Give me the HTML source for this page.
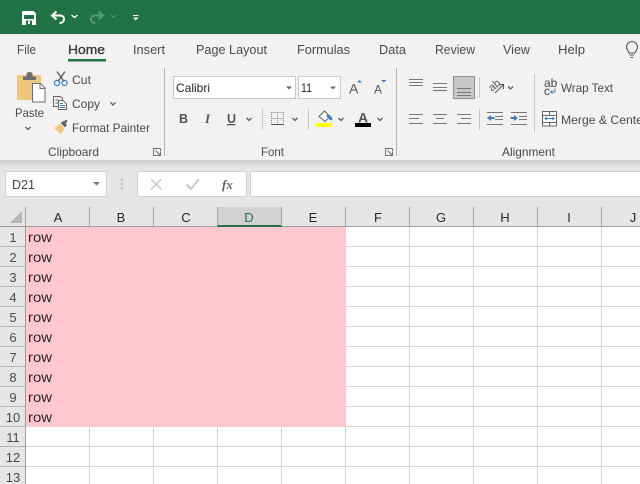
<!DOCTYPE html>
<html><head><meta charset="utf-8"><style>
html,body{margin:0;padding:0;width:640px;height:484px;overflow:hidden;background:#fff}
svg{display:block}
text{font-family:"Liberation Sans",sans-serif;fill:#4a4a4a;font-size:12px}
.t{font-size:13px;fill:#4a4a4a}
.h{font-size:13px;fill:#262626;text-anchor:middle}
.r{font-size:14px;fill:#262626}
.n{font-size:13px;fill:#4a4a4a;text-anchor:middle}
.c{fill:none;stroke:#5c5c5c;stroke-width:1.300}
.l{stroke:#777;stroke-width:1;fill:none}
</style></head><body>
<svg width="640" height="484" viewBox="0 0 640 484" xmlns="http://www.w3.org/2000/svg">
<defs><linearGradient id="sh" x1="0" y1="0" x2="0" y2="1"><stop offset="0" stop-color="#cdcdcd"/><stop offset="1" stop-color="#e6e6e6"/></linearGradient></defs>
<rect width="640" height="484" fill="#fff"/>
<rect width="640" height="34" fill="#217346"/>
<rect y="34" width="640" height="126" fill="#f3f2f1"/>
<rect y="160" width="640" height="8" fill="url(#sh)"/>
<rect y="168" width="640" height="59" fill="#e6e6e6"/>

<!-- QAT -->
<path d="M22 11h11.500l2.500 2.500v11.500h-14z" fill="#fff"/>
<rect x="24" y="15" width="10" height="4" fill="#217346"/>
<rect x="26" y="20.500" width="6" height="4.500" fill="#217346"/><rect x="28" y="21" width="2" height="3" fill="#fff"/>
<path d="M56.500 11.500l-4.500 4 4.500 4M52.500 15.500h7.500c5.500 0 5.500 7.500-.500 7.500" fill="none" stroke="#fff" stroke-width="2"/>
<path d="M71.500 15l3 2.500 3-2.500" fill="none" stroke="#fff" stroke-width="1.400"/>
<path d="M98.500 11.500l4.500 4-4.500 4M102.500 15.500h-7.500c-5.500 0-5.500 7.500.500 7.500" fill="none" stroke="#5a9a76" stroke-width="2"/>
<path d="M111 15l2.500 2.500 2.500-2.500" fill="none" stroke="#4f9670" stroke-width="1.200"/>
<path d="M133 15.500h5.500" stroke="#fff" stroke-width="1"/><path d="M133 17.500h5.500l-2.750 3z" fill="#fff"/>

<!-- Tabs -->
<text class="t" x="17" y="54" textLength="19" lengthAdjust="spacingAndGlyphs">File</text>
<text class="t" x="68" y="54" textLength="37" lengthAdjust="spacingAndGlyphs" style="fill:#333;stroke:#333;stroke-width:.3">Home</text>
<rect x="68" y="59" width="38" height="2.500" fill="#217346"/>
<text class="t" x="133" y="54" textLength="32" lengthAdjust="spacingAndGlyphs">Insert</text>
<text class="t" x="196" y="54" textLength="71" lengthAdjust="spacingAndGlyphs">Page Layout</text>
<text class="t" x="297" y="54" textLength="53" lengthAdjust="spacingAndGlyphs">Formulas</text>
<text class="t" x="379" y="54" textLength="27" lengthAdjust="spacingAndGlyphs">Data</text>
<text class="t" x="435" y="54" textLength="40" lengthAdjust="spacingAndGlyphs">Review</text>
<text class="t" x="503" y="54" textLength="27" lengthAdjust="spacingAndGlyphs">View</text>
<text class="t" x="558" y="54" textLength="27" lengthAdjust="spacingAndGlyphs">Help</text>
<path d="M629 53c-.500-2-2.500-3-2.500-6a5.500 5.500 0 0 1 11 0c0 3-2 4-2.500 6zM629.500 55h4.500M630.500 57.500h2.500" fill="none" stroke="#555" stroke-width="1.100"/>

<!-- Clipboard -->
<path d="M17 76a1 1 0 0 1 1-1h22a1 1 0 0 1 1 1v23a1 1 0 0 1-1 1h-22a1 1 0 0 1-1-1z" fill="#eec77f"/>
<path d="M23 80v-3.500h3.500v-2.500a3 2 0 0 1 6 0v2.500h3.500v3.500z" fill="#6d6d6d"/>
<path d="M32.500 83.500h8l4.500 4.500v14h-12.500z" fill="#fff" stroke="#6f6f6f" stroke-width="1"/>
<path d="M40 83.500v5h5" fill="none" stroke="#6f6f6f"/>
<text x="15" y="117" textLength="29" lengthAdjust="spacingAndGlyphs">Paste</text>
<path d="M25.500 127l2.500 2.500 2.500-2.500" class="c"/>
<path d="M57 71.500l7 10M65 71.500l-7 10" stroke="#666" stroke-width="1.500" fill="none"/>
<circle cx="57" cy="83" r="2.600" fill="none" stroke="#3f7fc1" stroke-width="1.300"/><circle cx="64.500" cy="83" r="2.600" fill="none" stroke="#3f7fc1" stroke-width="1.300"/>
<text x="72" y="84" textLength="19" lengthAdjust="spacingAndGlyphs">Cut</text>
<path d="M53.500 96.500h7l2 2v8h-9z" fill="#f3f2f1" stroke="#666"/>
<path d="M55.500 100h3M55.500 103h3" stroke="#666"/>
<path d="M58.500 100.500h4.500l3.500 3.500v5.500h-8z" fill="#fff" stroke="#666"/>
<path d="M60 103.500h3M60 105.500h5M60 107.500h5" stroke="#3f7fc1"/>
<text x="72" y="108" textLength="28" lengthAdjust="spacingAndGlyphs">Copy</text>
<path d="M110.500 102.500l2.500 2.500 2.500-2.500" class="c"/>
<path d="M54 128l6-4 4.500 5-3.500 5z" fill="#eec77f"/><path d="M60.500 123l3-2 3.500 3.500-2 3z" fill="#666"/><path d="M64 122.500l3-2" stroke="#666" stroke-width="2.500"/>
<text x="72" y="132" textLength="78" lengthAdjust="spacingAndGlyphs">Format Painter</text>
<text x="48" y="156" textLength="51" lengthAdjust="spacingAndGlyphs">Clipboard</text>
<path d="M153.500 148.500h7M153.500 148.500v7M160.500 148.500v3M153.500 155.500h3M155.500 150.500l5 5M160.500 152v3.500h-3.500" fill="none" stroke="#666" stroke-width=".9"/>
<rect x="164" y="68" width="1" height="88" fill="#b4b4b4"/>

<!-- Font -->
<rect x="173.500" y="76.500" width="122" height="22" fill="#fff" stroke="#c8c8c8"/>
<text x="176" y="92" textLength="34" lengthAdjust="spacingAndGlyphs" style="fill:#262626">Calibri</text>
<path d="M286 86.500h6l-3 3z" fill="#666"/>
<rect x="298.500" y="76.500" width="42" height="22" fill="#fff" stroke="#c8c8c8"/>
<text x="301" y="92" textLength="11" lengthAdjust="spacingAndGlyphs" style="fill:#262626">11</text>
<path d="M330 86.500h6l-3 3z" fill="#666"/>
<text x="349" y="93.500" style="font-size:14px;fill:#555">A</text><path d="M357 82.500l2.500-2.500 2.500 2.500z" fill="#3f7fc1"/>
<text x="374" y="93.500" style="font-size:12px;fill:#555">A</text><path d="M381 80h5.500l-2.750 2.500z" fill="#3f7fc1"/>
<text x="179" y="123" style="font-size:12.500px;font-weight:700;fill:#555">B</text>
<text x="205" y="123" style="font-size:13px;font-weight:700;font-style:italic;font-family:'Liberation Serif',serif;fill:#555">I</text>
<text x="227" y="123" style="font-size:12.500px;font-weight:700;fill:#555">U</text><rect x="227" y="124" width="8.500" height="1.300" fill="#555"/>
<path d="M246.500 118l2.500 2.500 2.500-2.500" class="c"/>
<rect x="262" y="109" width="1" height="21" fill="#c6c6c6"/>
<path d="M271.500 112.500h12M271.500 118.500h12M271.500 112v12M277.500 112v12M283.500 112v12" stroke="#888" stroke-width="1" stroke-dasharray="1 1" fill="none"/>
<path d="M271 124.500h13" stroke="#555"/>
<path d="M292.500 118l2.500 2.500 2.500-2.500" class="c"/>
<rect x="308" y="109" width="1" height="21" fill="#c6c6c6"/>
<path d="M319 116.500l5.500-5.500 5.500 5.500-5 5z" fill="#fff" stroke="#666"/><path d="M326 115c3-.500 6 .500 6.500 5-2 1-4-1-5-2.500z" fill="#3f7fc1"/>
<rect x="316" y="123" width="16" height="4" fill="#ffff00"/>
<path d="M338.500 118l2.500 2.500 2.500-2.500" class="c"/>
<text x="363" y="122.500" text-anchor="middle" style="font-size:14px;font-weight:700;fill:#555">A</text>
<rect x="355" y="123" width="16" height="4" fill="#000"/>
<path d="M377.500 118l2.500 2.500 2.500-2.500" class="c"/>
<text x="261" y="156" textLength="23" lengthAdjust="spacingAndGlyphs">Font</text>
<path d="M385.500 148.500h7M385.500 148.500v7M392.500 148.500v3M385.500 155.500h3M387.500 150.500l5 5M392.500 152v3.500h-3.500" fill="none" stroke="#666" stroke-width=".9"/>
<rect x="396" y="68" width="1" height="88" fill="#b4b4b4"/>

<!-- Alignment -->
<path d="M409 79.500h14M409 82.500h14M409 85.500h14" class="l"/>
<path d="M433 83.500h14M433 87.500h14M433 90.500h14" class="l"/>
<rect x="453.500" y="76.500" width="21" height="22" fill="#c8c8c8" stroke="#8f8f8f"/>
<path d="M457 88.500h14M457 92.500h14M457 95.500h14" class="l"/>
<rect x="479" y="77" width="1" height="21" fill="#c6c6c6"/>
<text x="488" y="89" transform="rotate(-40 494 85)" style="font-size:11px;fill:#555">ab</text>
<path d="M495 93l8-8M499 84.500h4.500v4.500" fill="none" stroke="#555" stroke-width="1"/>
<path d="M508 86.500l2.500 2.500 2.500-2.500" class="c"/>
<rect x="534" y="74" width="1" height="59" fill="#c6c6c6"/>
<text x="544" y="87" style="font-size:12px;fill:#444">ab</text><text x="544" y="95" style="font-size:12px;fill:#444">c</text>
<path d="M555 88.500v3.500h-4M552.500 90.500l-2 1.500 2 1.500" fill="none" stroke="#3f7fc1" stroke-width=".9"/>
<text x="561" y="92" textLength="52" lengthAdjust="spacingAndGlyphs">Wrap Text</text>
<path d="M409 114.500h14M409 118.500h10M409 123.500h14" class="l"/>
<path d="M433 114.500h14M436 118.500h8M433 123.500h14" class="l"/>
<path d="M457 114.500h14M461 118.500h10M457 123.500h14" class="l"/>
<rect x="479" y="109" width="1" height="21" fill="#c6c6c6"/>
<path d="M487 112.500h16M495 116.500h8M495 119.500h8M487 124.500h16" class="l"/>
<path d="M487 118l4-3v2h3.500v2h-3.500v2z" fill="#3f7fc1"/>
<path d="M511 112.500h16M519 116.500h8M519 119.500h8M511 124.500h16" class="l"/>
<path d="M518 118l-4-3v2h-3.500v2h3.500v2z" fill="#3f7fc1"/>
<rect x="542.500" y="111.500" width="14" height="14.500" fill="#fff" stroke="#666"/>
<path d="M543 115.500h13M543 122.500h13M549.500 111.500v4M549.500 122.500v4" stroke="#666"/>
<path d="M545 118.500h9" stroke="#3f7fc1"/><path d="M546.500 117l-1.500 1.500 1.500 1.500M552.500 117l1.500 1.500-1.500 1.500" fill="none" stroke="#3f7fc1"/>
<text x="561" y="124" textLength="86" lengthAdjust="spacingAndGlyphs">Merge &amp; Center</text>
<text x="502" y="156" textLength="53" lengthAdjust="spacingAndGlyphs">Alignment</text>

<!-- Formula bar -->
<rect x="5.500" y="171.500" width="101" height="25" fill="#fff" stroke="#d2d2d2"/>
<text x="12" y="189" textLength="23" lengthAdjust="spacingAndGlyphs" style="font-size:13px;fill:#444">D21</text>
<path d="M93 182h7l-3.500 3.500z" fill="#777"/>
<path d="M122 179v2M122 183v2M122 187v2" stroke="#aaa" stroke-width="1.500"/>
<rect x="137.500" y="171.500" width="109" height="25" fill="#fff" stroke="#cfcfcf"/>
<path d="M151 179l10.500 10.500M161.500 179l-10.500 10.500" stroke="#c8c8c8" stroke-width="1.500"/>
<path d="M186.500 184.500l4.500 4.500 8-10" fill="none" stroke="#c8c8c8" stroke-width="2"/>
<text x="222" y="189" style="font-family:'Liberation Serif',serif;font-style:italic;font-weight:700;font-size:13px;fill:#666">fx</text>
<rect x="250.500" y="171.500" width="400" height="25" fill="#fff" stroke="#cfcfcf"/>

<!-- Sheet grid -->
<g stroke="#d4d4d4" stroke-width="1">
<path d="M409.500 227v257M473.500 227v257M537.500 227v257M601.500 227v257"/>
<path d="M89.500 427v57M153.500 427v57M217.500 427v57M281.500 427v57M345.500 427v57"/>
<path d="M345 246.500h295M345 266.500h295M345 286.500h295M345 306.500h295M345 326.500h295M345 346.500h295M345 366.500h295M345 386.500h295M345 406.500h295M26 426.500h614M26 446.500h614M26 466.500h614"/>
</g>
<rect x="26" y="227" width="320" height="200" fill="#ffc7ce"/>

<!-- Column headers -->
<rect x="0" y="207" width="640" height="20" fill="#e6e6e6"/>
<rect x="217" y="207" width="65" height="18" fill="#d2d2d2"/>
<rect x="0" y="226" width="640" height="1" fill="#9f9f9f"/>
<rect x="217" y="225" width="65" height="2" fill="#217346"/>
<g fill="#a5a5a5">
<rect x="25" y="207" width="1" height="19"/><rect x="89" y="207" width="1" height="19"/><rect x="153" y="207" width="1" height="19"/><rect x="217" y="207" width="1" height="19"/><rect x="281" y="207" width="1" height="19"/><rect x="345" y="207" width="1" height="19"/><rect x="409" y="207" width="1" height="19"/><rect x="473" y="207" width="1" height="19"/><rect x="537" y="207" width="1" height="19"/><rect x="601" y="207" width="1" height="19"/>
</g>
<path d="M10 223l12-12v12z" fill="#b5b5b5"/>
<text class="h" x="58" y="222">A</text><text class="h" x="121" y="222">B</text><text class="h" x="186" y="222">C</text>
<text class="h" x="249" y="222" style="fill:#217346">D</text><text class="h" x="313" y="222">E</text><text class="h" x="378" y="222">F</text>
<text class="h" x="441" y="222">G</text><text class="h" x="505" y="222">H</text><text class="h" x="569" y="222">I</text><text class="h" x="633" y="222">J</text>

<!-- Row headers -->
<rect x="0" y="227" width="26" height="257" fill="#e6e6e6"/>
<rect x="25" y="227" width="1" height="257" fill="#9f9f9f"/>
<path d="M0 246.500h25M0 266.500h25M0 286.500h25M0 306.500h25M0 326.500h25M0 346.500h25M0 366.500h25M0 386.500h25M0 406.500h25M0 426.500h25M0 446.500h25M0 466.500h25" stroke="#b5b5b5"/>
<text class="n" x="13" y="242">1</text><text class="n" x="13" y="262">2</text><text class="n" x="13" y="282">3</text><text class="n" x="13" y="302">4</text><text class="n" x="13" y="322">5</text><text class="n" x="13" y="342">6</text><text class="n" x="13" y="362">7</text><text class="n" x="13" y="382">8</text><text class="n" x="13" y="402">9</text><text class="n" x="13" y="422">10</text><text class="n" x="13" y="442">11</text><text class="n" x="13" y="462">12</text><text class="n" x="13" y="482">13</text>

<!-- Cells -->
<g>
<text class="r" x="28" y="242" textLength="24" lengthAdjust="spacingAndGlyphs">row</text>
<text class="r" x="28" y="262" textLength="24" lengthAdjust="spacingAndGlyphs">row</text>
<text class="r" x="28" y="282" textLength="24" lengthAdjust="spacingAndGlyphs">row</text>
<text class="r" x="28" y="302" textLength="24" lengthAdjust="spacingAndGlyphs">row</text>
<text class="r" x="28" y="322" textLength="24" lengthAdjust="spacingAndGlyphs">row</text>
<text class="r" x="28" y="342" textLength="24" lengthAdjust="spacingAndGlyphs">row</text>
<text class="r" x="28" y="362" textLength="24" lengthAdjust="spacingAndGlyphs">row</text>
<text class="r" x="28" y="382" textLength="24" lengthAdjust="spacingAndGlyphs">row</text>
<text class="r" x="28" y="402" textLength="24" lengthAdjust="spacingAndGlyphs">row</text>
<text class="r" x="28" y="422" textLength="24" lengthAdjust="spacingAndGlyphs">row</text>
</g>
</svg>
</body></html>
